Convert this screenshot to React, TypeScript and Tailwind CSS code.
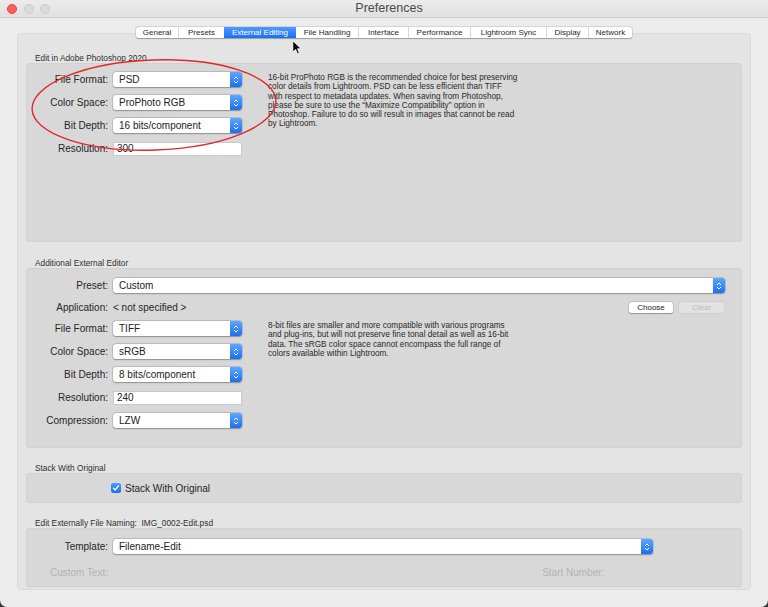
import React from "react";

function Stepper() {
  return (
    <div className="w-[12px] h-full rounded-r-[3px] bg-linear-to-b from-[#5ba7ff] to-[#1b6ff0] flex items-center justify-center">
      <svg width="6" height="10" viewBox="0 0 6 10">
        <path d="M1.2 3.8 L3 2 L4.8 3.8 M1.2 6.2 L3 8 L4.8 6.2" stroke="white" strokeWidth="1" fill="none" strokeLinecap="round" strokeLinejoin="round" />
      </svg>
    </div>
  );
}

function Popup({ value, wide }: { value: string; wide?: string }) {
  return (
    <div className={(wide ?? "w-[129px]") + " h-[15px] bg-white rounded-[3px] shadow-[0_0_0_0.5px_rgba(0,0,0,0.18),0_0.5px_1.5px_rgba(0,0,0,0.28)] flex items-stretch"}>
      <span className="flex-1 pl-[6px] text-[10px] leading-[15px] text-[#222]">{value}</span>
      <Stepper />
    </div>
  );
}

function TextField({ value }: { value: string }) {
  return (
    <div className="w-[129px] h-[14px] bg-white border border-[#c9c9c9] flex items-center">
      <span className="pl-[3px] text-[10px] leading-[14px] text-[#222]">{value}</span>
    </div>
  );
}

function Row({ label, children, h = "h-[15px]" }: { label: string; children: React.ReactNode; h?: string }) {
  return (
    <div className={"flex items-center " + h}>
      <div className="w-[81px] text-right text-[10px] text-[#262626] whitespace-nowrap">{label}</div>
      <div className="ml-[5px]">{children}</div>
    </div>
  );
}

function SectionLabel({ children }: { children: React.ReactNode }) {
  return (
    <div className="h-[10px] leading-[10px] text-[8.3px] text-[#303030] pl-[9px] whitespace-nowrap">{children}</div>
  );
}

const tabs: { name: string; w: string; sel?: boolean }[] = [
  { name: "General", w: "w-[42px]" },
  { name: "Presets", w: "w-[46px]" },
  { name: "External Editing", w: "w-[72px]", sel: true },
  { name: "File Handling", w: "w-[62px]" },
  { name: "Interface", w: "w-[50px]" },
  { name: "Performance", w: "w-[62px]" },
  { name: "Lightroom Sync", w: "w-[76px]" },
  { name: "Display", w: "w-[42px]" },
  { name: "Network", w: "w-[44px]" },
];

export default function App() {
  return (
    <div className="w-[768px] h-[607px] bg-[#3a3a3a] font-['Liberation_Sans',Arial,sans-serif] overflow-hidden relative">
      <div className="w-full h-[607px] bg-[#ececec] rounded-b-[7px] flex flex-col">
        {/* title bar */}
        <div className="h-[18px] bg-linear-to-b from-[#ececec] to-[#e0e0e0] border-b border-[#cdcdcd] flex items-center relative">
          <div className="flex items-center gap-[6.5px] pl-[7px]">
            <div className="w-[10px] h-[10px] rounded-full bg-[#fd5f57] border border-[#e2463f]" />
            <div className="w-[10px] h-[10px] rounded-full bg-[#d9d9d9] border border-[#cccccc]" />
            <div className="w-[10px] h-[10px] rounded-full bg-[#d9d9d9] border border-[#cccccc]" />
          </div>
          <div className="flex-1 text-center text-[12.5px] text-[#4a4a4a] -ml-[40px]">Preferences</div>
        </div>

        {/* tabs */}
        <div className="relative z-10 mt-[9px] flex justify-center">
          <div className="flex h-[11px] bg-white rounded-[2.5px] shadow-[0_0_0_0.5px_rgba(0,0,0,0.15),0_0.5px_1px_rgba(0,0,0,0.25)] overflow-hidden">
            {tabs.map((t, i) => (
              <div
                key={t.name}
                className={
                  t.w +
                  " text-center text-[8px] leading-[11px] whitespace-nowrap " +
                  (t.sel
                    ? "bg-linear-to-b from-[#4b9bff] to-[#1a6ff0] text-white"
                    : "text-[#2a2a2a] " + (i > 0 && !tabs[i - 1].sel ? "border-l border-[#d6d6d6]" : ""))
                }
              >
                {t.name}
              </div>
            ))}
          </div>
        </div>

        {/* panel */}
        <div className="mx-[17px] -mt-[5px] h-[557px] bg-[#e4e4e4] border border-[#dadada] rounded-[4px] pt-[19px] px-[8px]">
          <SectionLabel>Edit in Adobe Photoshop 2020</SectionLabel>
          <div className="h-[179px] bg-[#d8d8d8] border border-[#d1d1d1] rounded-[3px] pt-[8px] flex">
            <div className="flex flex-col gap-[8px]">
              <Row label="File Format:"><Popup value="PSD" /></Row>
              <Row label="Color Space:"><Popup value="ProPhoto RGB" /></Row>
              <Row label="Bit Depth:"><Popup value="16 bits/component" /></Row>
              <Row label="Resolution:"><TextField value="300" /></Row>
            </div>
            <div className="ml-[26px] pt-[1px] text-[8.2px] leading-[9.3px] text-[#2a2a2a] whitespace-nowrap">
              16-bit ProPhoto RGB is the recommended choice for best preserving<br />
              color details from Lightroom. PSD can be less efficient than TIFF<br />
              with respect to metadata updates. When saving from Photoshop,<br />
              please be sure to use the “Maximize Compatibility” option in<br />
              Photoshop. Failure to do so will result in images that cannot be read<br />
              by Lightroom.
            </div>
          </div>

          <div className="mt-[16px]">
            <SectionLabel>Additional External Editor</SectionLabel>
          </div>
          <div className="h-[180px] bg-[#d8d8d8] border border-[#d1d1d1] rounded-[3px] pt-[9px]">
            <Row label="Preset:"><Popup value="Custom" wide="w-[612px]" /></Row>
            <div className="flex items-center h-[14px] mt-[7px]">
              <div className="w-[81px] text-right text-[10px] text-[#262626]">Application:</div>
              <div className="ml-[5px] text-[10px] text-[#262626]">&lt; not specified &gt;</div>
              <div className="ml-auto mr-[17px] flex gap-[6px]">
                <div className="w-[44px] h-[11px] bg-white rounded-[2.5px] shadow-[0_0_0_0.5px_rgba(0,0,0,0.18),0_0.5px_1px_rgba(0,0,0,0.25)] text-center text-[8px] leading-[11px] text-[#222]">Choose</div>
                <div className="w-[45px] h-[11px] bg-[#e2e2e2] rounded-[2.5px] shadow-[0_0_0_0.5px_rgba(0,0,0,0.08)] text-center text-[8px] leading-[11px] text-[#bcbcbc]">Clear</div>
              </div>
            </div>
            <div className="flex mt-[7px]">
              <div className="flex flex-col gap-[8px]">
                <Row label="File Format:"><Popup value="TIFF" /></Row>
                <Row label="Color Space:"><Popup value="sRGB" /></Row>
                <Row label="Bit Depth:"><Popup value="8 bits/component" /></Row>
                <Row label="Resolution:"><TextField value="240" /></Row>
                <Row label="Compression:"><Popup value="LZW" /></Row>
              </div>
              <div className="ml-[26px] pt-[0px] text-[8.2px] leading-[9.3px] text-[#2a2a2a] whitespace-nowrap">
                8-bit files are smaller and more compatible with various programs<br />
                and plug-ins, but will not preserve fine tonal detail as well as 16-bit<br />
                data. The sRGB color space cannot encompass the full range of<br />
                colors available within Lightroom.
              </div>
            </div>
          </div>

          <div className="mt-[15px]">
            <SectionLabel>Stack With Original</SectionLabel>
          </div>
          <div className="h-[30px] bg-[#d8d8d8] border border-[#d1d1d1] rounded-[3px] flex items-center pl-[84px]">
            <div className="w-[10px] h-[10px] rounded-[2.5px] bg-linear-to-b from-[#4b9bff] to-[#1a6ff0] flex items-center justify-center">
              <svg width="8" height="8" viewBox="0 0 8 8">
                <path d="M1.5 4.2 L3.2 6 L6.5 1.8" stroke="white" strokeWidth="1.3" fill="none" strokeLinecap="round" strokeLinejoin="round" />
              </svg>
            </div>
            <span className="ml-[4px] text-[10px] text-[#262626]">Stack With Original</span>
          </div>

          <div className="mt-[15px]">
            <SectionLabel>Edit Externally File Naming:&nbsp; IMG_0002-Edit.psd</SectionLabel>
          </div>
          <div className="h-[59px] bg-[#d8d8d8] border border-[#d1d1d1] rounded-[3px] pt-[10px]">
            <Row label="Template:"><Popup value="Filename-Edit" wide="w-[540px]" /></Row>
            <div className="flex items-center h-[14px] mt-[11px] text-[10px] text-[#b3b3b3]">
              <span className="ml-[23px]">Custom Text:</span>
              <span className="ml-[434px]">Start Number:</span>
            </div>
          </div>
        </div>
      </div>

      {/* annotation */}
      <svg className="absolute left-0 top-0 pointer-events-none" width="768" height="607">
        <ellipse cx="154" cy="105" rx="122" ry="45" transform="rotate(-2 154 105)" stroke="#e3262c" strokeWidth="1.4" fill="none" />
      </svg>
      {/* cursor */}
      <svg className="absolute left-[292px] top-[40px]" width="10" height="15" viewBox="0 0 12 18">
        <path d="M1 1 L1 14.5 L4.3 11.4 L6.6 16.6 L8.8 15.7 L6.6 10.6 L11 10.6 Z" fill="#000" stroke="#fff" strokeWidth="1" strokeLinejoin="round" />
      </svg>
    </div>
  );
}
